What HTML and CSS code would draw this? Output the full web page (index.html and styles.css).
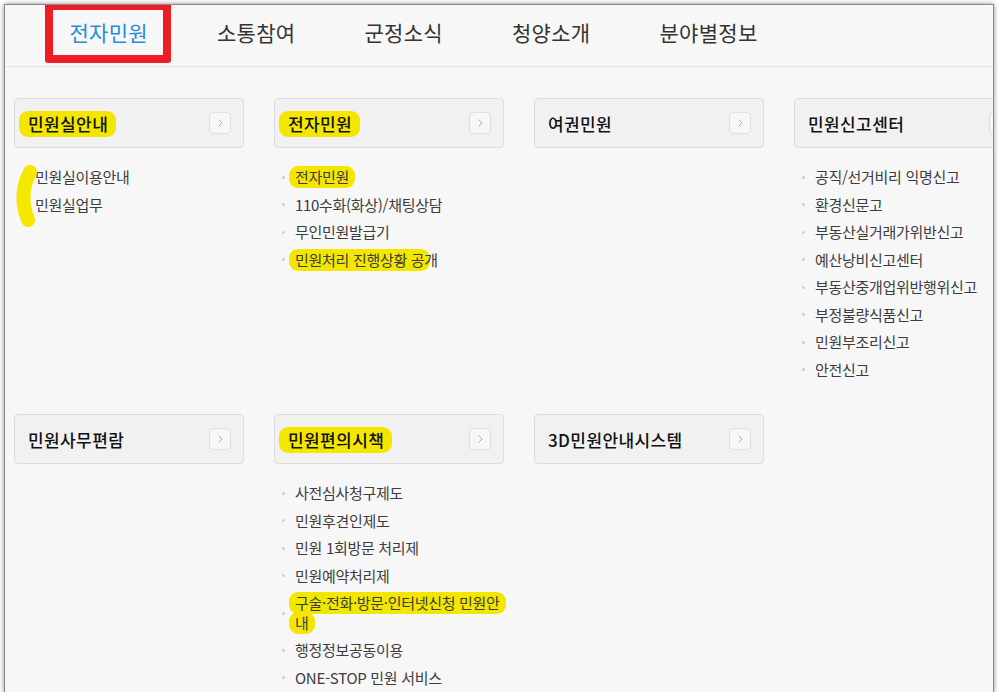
FILE: index.html
```html
<!DOCTYPE html>
<html lang="ko">
<head>
  <meta charset="UTF-8">
  <meta name="viewport" content="width=device-width, initial-scale=1.0">
  <title>전자민원</title>
  <link rel="stylesheet" href="styles.css">
</head>
<body>
  <div class="frame">
    <nav class="gnb">
      <a class="gnb-item active marked" href="#">전자민원</a>
      <a class="gnb-item" href="#">소통참여</a>
      <a class="gnb-item" href="#">군정소식</a>
      <a class="gnb-item" href="#">청양소개</a>
      <a class="gnb-item" href="#">분야별정보</a>
    </nav>

    <div class="sitemap">
      <!-- row 1 -->
      <section class="group">
        <div class="group-head">
          <h3><span class="hl">민원실안내</span></h3>
          <a class="more" href="#"><svg width="8" height="10" viewBox="0 0 8 10"><path d="M2.5 1.5 6 5 2.5 8.5" fill="none" stroke="#aaa" stroke-width="1"/></svg></a>
        </div>
        <ul class="links">
          <li>민원실이용안내</li>
          <li>민원실업무</li>
        </ul>
        <svg class="stroke-mark" width="30" height="80" viewBox="0 0 30 80"><path d="M16 14 Q4 37 14 62" fill="none" stroke="#f5e800" stroke-width="14" stroke-linecap="round"/></svg>
      </section>

      <section class="group">
        <div class="group-head">
          <h3><span class="hl">전자민원</span></h3>
          <a class="more" href="#"><svg width="8" height="10" viewBox="0 0 8 10"><path d="M2.5 1.5 6 5 2.5 8.5" fill="none" stroke="#aaa" stroke-width="1"/></svg></a>
        </div>
        <ul class="links">
          <li><span class="hl">전자민원</span></li>
          <li>110수화(화상)/채팅상담</li>
          <li>무인민원발급기</li>
          <li><span class="hl">민원처리 진행상황 공</span>개</li>
        </ul>
      </section>

      <section class="group">
        <div class="group-head">
          <h3>여권민원</h3>
          <a class="more" href="#"><svg width="8" height="10" viewBox="0 0 8 10"><path d="M2.5 1.5 6 5 2.5 8.5" fill="none" stroke="#aaa" stroke-width="1"/></svg></a>
        </div>
      </section>

      <section class="group">
        <div class="group-head">
          <h3>민원신고센터</h3>
          <a class="more" href="#"><svg width="8" height="10" viewBox="0 0 8 10"><path d="M2.5 1.5 6 5 2.5 8.5" fill="none" stroke="#aaa" stroke-width="1"/></svg></a>
        </div>
        <ul class="links">
          <li>공직/선거비리 익명신고</li>
          <li>환경신문고</li>
          <li>부동산실거래가위반신고</li>
          <li>예산낭비신고센터</li>
          <li>부동산중개업위반행위신고</li>
          <li>부정불량식품신고</li>
          <li>민원부조리신고</li>
          <li>안전신고</li>
        </ul>
      </section>

      <!-- row 2 -->
      <section class="group">
        <div class="group-head">
          <h3>민원사무편람</h3>
          <a class="more" href="#"><svg width="8" height="10" viewBox="0 0 8 10"><path d="M2.5 1.5 6 5 2.5 8.5" fill="none" stroke="#aaa" stroke-width="1"/></svg></a>
        </div>
      </section>

      <section class="group">
        <div class="group-head">
          <h3><span class="hl">민원편의시책</span></h3>
          <a class="more" href="#"><svg width="8" height="10" viewBox="0 0 8 10"><path d="M2.5 1.5 6 5 2.5 8.5" fill="none" stroke="#aaa" stroke-width="1"/></svg></a>
        </div>
        <ul class="links">
          <li>사전심사청구제도</li>
          <li>민원후견인제도</li>
          <li>민원 1회방문 처리제</li>
          <li>민원예약처리제</li>
          <li><span class="hl">구술·전화·방문·인터넷신청 민원안내</span></li>
          <li>행정정보공동이용</li>
          <li>ONE-STOP 민원 서비스</li>
        </ul>
      </section>

      <section class="group">
        <div class="group-head">
          <h3>3D민원안내시스템</h3>
          <a class="more" href="#"><svg width="8" height="10" viewBox="0 0 8 10"><path d="M2.5 1.5 6 5 2.5 8.5" fill="none" stroke="#aaa" stroke-width="1"/></svg></a>
        </div>
      </section>
    </div>
  </div>
</body>
</html>
```

FILE: styles.css
```css
body {
  margin: 0;
  background: #fff;
  font-family: "Noto Sans CJK KR", "Noto Sans", sans-serif;
}
.frame {
  position: relative;
  margin: 5px 0 0 5px;
  width: 988px;
  height: 687px;
  background: #f7f7f7;
  overflow: hidden;
  box-shadow: 0 0 0 1px #8a8a8a, 0 0 5px 1px rgba(0, 0, 0, 0.45);
}

/* top menu */
.gnb {
  display: flex;
  height: 61px;
  padding-left: 30px;
  border-bottom: 1px solid #e3e3e3;
}
.gnb-item {
  position: relative;
  padding: 0 34.5px;
  line-height: 54px;
  font-size: 21px;
  letter-spacing: 0.3px;
  color: #333;
  text-decoration: none;
}
.gnb-item.active {
  color: #1e8ed8;
}
.gnb-item.marked::after {
  content: "";
  position: absolute;
  left: 10px;
  right: 11px;
  top: -3px;
  height: 61px;
  border: 8px solid #ee1d25;
  border-radius: 3px;
  box-sizing: border-box;
}

/* sitemap */
.sitemap {
  display: grid;
  grid-template-columns: repeat(4, 230px);
  column-gap: 30px;
  row-gap: 31px;
  align-items: start;
  padding: 31px 0 0 9px;
}
.group {
  position: relative;
}
.group-head {
  display: flex;
  align-items: center;
  justify-content: space-between;
  height: 48px;
  padding: 0 12px 0 13px;
  background: #f1f1f1;
  border: 1px solid #dcdcdc;
  border-radius: 4px;
}
.group-head h3 {
  margin: 0;
  font-size: 17px;
  font-weight: 500;
  color: #111;
  letter-spacing: 0.4px;
}
.more {
  display: flex;
  align-items: center;
  justify-content: center;
  width: 20px;
  height: 20px;
  border: 1px solid #dedede;
  border-radius: 4px;
  background: #f7f7f7;
}
.links {
  list-style: none;
  margin: 15px 0 0;
  padding: 0 0 0 21px;
}
.links li {
  position: relative;
  padding: 4px 0;
  line-height: 19.5px;
  font-size: 15px;
  letter-spacing: -0.3px;
  color: #3d3d3d;
}
.links li::before {
  content: "";
  position: absolute;
  left: -13px;
  top: 50%;
  width: 3px;
  height: 3px;
  margin-top: -1px;
  border-radius: 50%;
  background: #cfcfcf;
}

/* yellow marker annotations */
.hl {
  background: #f3e600;
  border-radius: 9px;
  padding: 0 6px 1px 6px;
  margin: 0 -6px;
  -webkit-box-decoration-break: clone;
  box-decoration-break: clone;
}
.group-head .hl {
  padding: 0 8px 1px 9px;
  margin: 0 -8px 0 -9px;
}
.stroke-mark {
  position: absolute;
  left: 0;
  top: 60px;
}
```
